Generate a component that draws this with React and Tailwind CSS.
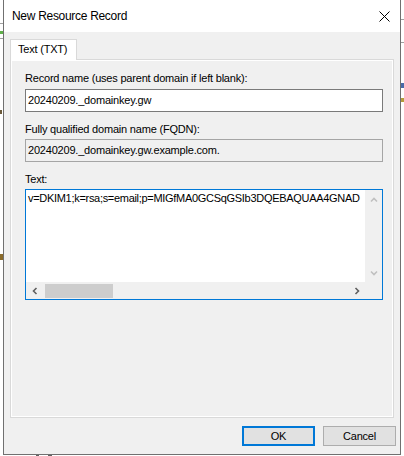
import React from "react";

function Chevron({ dir, color }) {
  const pts = {
    up: "1,5.5 4,2.5 7,5.5",
    down: "1,2.5 4,5.5 7,2.5",
    left: "5.5,1 2.5,4 5.5,7",
    right: "2.5,1 5.5,4 2.5,7",
  }[dir];
  return (
    <svg width="8" height="8" viewBox="0 0 8 8" className="block">
      <polyline points={pts} fill="none" stroke={color} strokeWidth="1.6" />
    </svg>
  );
}

export default function App() {
  return (
    <div className="relative w-[404px] h-[456px] overflow-hidden bg-white text-black font-['Liberation_Sans',Arial,sans-serif]">
      {/* background application bits peeking around the dialog */}
      <div className="absolute left-0 top-[23px] w-[3px] h-px bg-[#a0a0a0]" />
      <div className="absolute left-0 top-[31px] w-[3px] h-[3px] bg-[#5fb04a]" />
      <div className="absolute left-0 top-[38px] w-[3px] h-px bg-[#a0a0a0]" />
      <div className="absolute left-0 top-[110px] w-[2px] h-[4px] bg-[#6b5a3a]" />
      <div className="absolute left-0 top-[254px] w-[3px] h-[6px] bg-[#8a6a2a]" />
      <div className="absolute left-[401px] top-[19px] w-[3px] h-px bg-[#a0a0a0]" />
      <div className="absolute left-[401px] top-[42px] w-[3px] h-px bg-[#a0a0a0]" />
      <div className="absolute left-[401px] top-[83px] w-[3px] h-[5px] bg-[#4a6aa8]" />
      <div className="absolute left-[401px] top-[98px] w-[3px] h-[4px] bg-[#b59b3a]" />
      <div className="absolute left-[36px] top-[455px] w-[3px] h-px bg-[#606060]" />
      <div className="absolute left-[48px] top-[455px] w-[4px] h-px bg-[#606060]" />

      <div className="relative ml-[3px] w-[398px] h-[455px] border-x border-b border-[#707070] bg-[#f0f0f0] flex flex-col">
        {/* title bar */}
        <div className="h-[32px] bg-white flex items-center justify-between pl-[8px] pr-[10px] shrink-0">
          <span className="text-[12px] tracking-[-0.3px] leading-[15px] pt-[1px]">New Resource Record</span>
          <svg width="11" height="11" viewBox="0 0 11 11" className="block">
            <path d="M0.5 0.5 L10.5 10.5 M10.5 0.5 L0.5 10.5" stroke="#000" strokeWidth="1" />
          </svg>
        </div>

        {/* body */}
        <div className="flex-1 flex flex-col pl-[6px] pt-[7px] text-[11px] tracking-[-0.2px] leading-[15px]">
          {/* tab strip */}
          <div className="flex">
            <div className="relative z-10 -mb-px w-[67px] h-[21px] bg-white border border-b-0 border-[#d9d9d9] pl-[7px] pt-[2px]">
              Text (TXT)
            </div>
          </div>

          {/* tab page */}
          <div className="w-[384px] h-[359px] border border-[#d9d9d9] shadow-[inset_1px_1px_0_#ffffff,inset_-1px_-1px_0_#ffffff] bg-[#f0f0f0] pl-[14px] pt-[11px] flex flex-col">
            <div>Record name (uses parent domain if left blank):</div>
            <div className="mt-[3px] w-[358px] h-[23px] bg-white border border-[#7a7a7a] pl-[2px] pt-[3px]">
              20240209._domainkey.gw
            </div>

            <div className="mt-[10px]">Fully qualified domain name (FQDN):</div>
            <div className="mt-[2px] w-[358px] h-[23px] bg-[#f0f0f0] border border-[#a5a5a5] pl-[2px] pt-[3px]">
              20240209._domainkey.gw.example.com.
            </div>

            <div className="mt-[10px]">Text:</div>
            <div className="mt-[2px] w-[358px] h-[111px] border border-[#0078d7] bg-white flex flex-col">
              <div className="flex h-[92px]">
                <div className="w-[339px] bg-white pl-[2px] pt-[1px] whitespace-nowrap overflow-hidden tracking-[-0.3px]">
                  v=DKIM1;k=rsa;s=email;p=MIGfMA0GCSqGSIb3DQEBAQUAA4GNAD
                </div>
                <div className="w-[17px] bg-[#f0f0f0] flex flex-col justify-between">
                  <div className="h-[17px] flex items-center justify-center pt-[2px]">
                    <Chevron dir="up" color="#c0c0c0" />
                  </div>
                  <div className="h-[17px] flex items-center justify-center pb-[2px]">
                    <Chevron dir="down" color="#c0c0c0" />
                  </div>
                </div>
              </div>
              <div className="flex h-[17px] bg-[#f0f0f0]">
                <div className="w-[17px] h-[17px] flex items-center justify-center pl-[1px] pt-[1px]">
                  <Chevron dir="left" color="#606060" />
                </div>
                <div className="flex-1 flex items-center pl-[2px]">
                  <div className="w-[68px] h-[14px] mt-[1px] bg-[#cdcdcd]" />
                </div>
                <div className="w-[17px] h-[17px] flex items-center justify-center pt-[1px]">
                  <Chevron dir="right" color="#606060" />
                </div>
                <div className="w-[17px] h-[17px] bg-[#f0f0f0]" />
              </div>
            </div>
          </div>

          {/* buttons */}
          <div className="mt-[8px] flex justify-end gap-[8px] pr-[4px]">
            <button className="w-[73px] h-[20px] bg-[#e1e1e1] border-2 border-[#0078d7] flex items-center justify-center">
              OK
            </button>
            <button className="w-[73px] h-[20px] bg-[#e1e1e1] border border-[#adadad] flex items-center justify-center">
              Cancel
            </button>
          </div>
        </div>
      </div>
    </div>
  );
}
